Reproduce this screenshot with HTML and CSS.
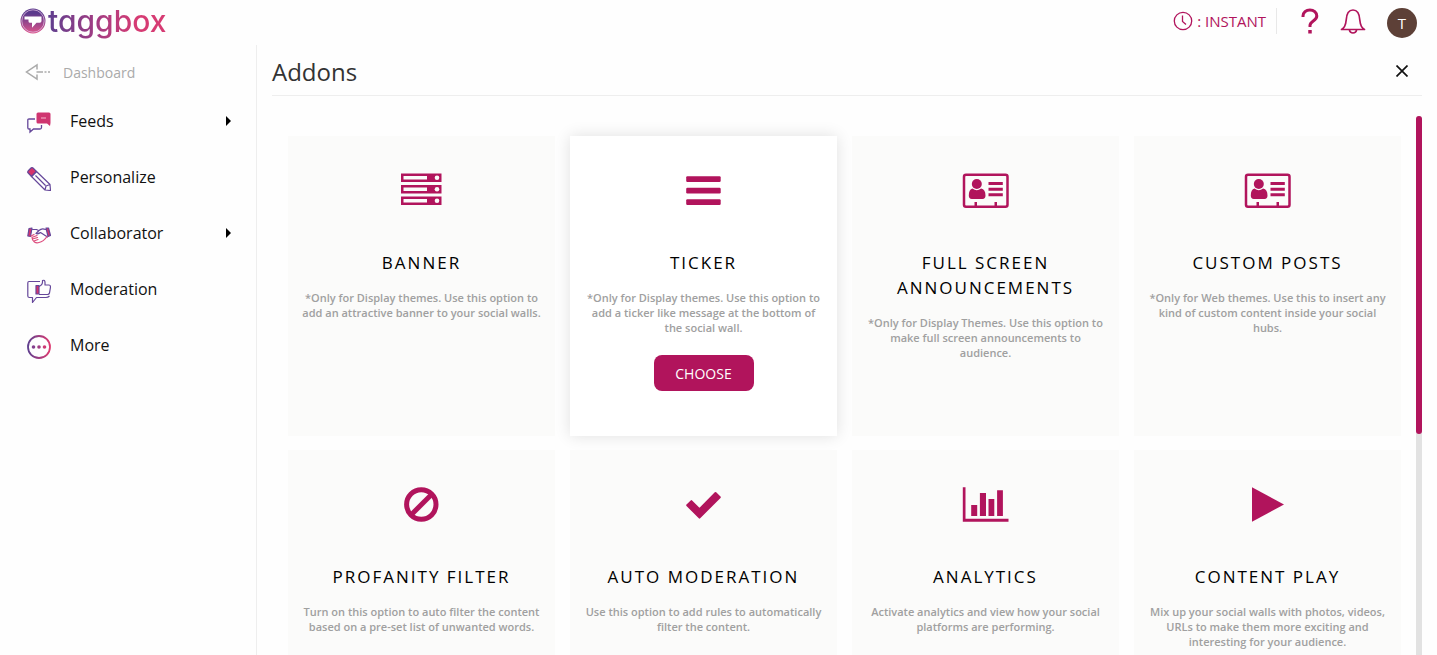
FILE: index.html
```html
<!DOCTYPE html>
<html lang="en">
<head>
    <meta charset="UTF-8">
    <meta name="viewport" content="width=device-width, initial-scale=1.0">
    <title>Taggbox - Addons</title>
    <link rel="stylesheet" href="styles.css">
</head>
<body>
    <header class="topbar">
        <a class="logo" href="#">
            <svg class="logo-mark" viewBox="0 0 26 26">
                <defs>
                    <linearGradient id="markFill" x1="0" y1="0" x2="0" y2="1">
                        <stop offset="0.2" stop-color="#5c3a8c"/>
                        <stop offset="1" stop-color="#e0558c"/>
                    </linearGradient>
                    <linearGradient id="iconFill" x1="0" y1="0" x2="1" y2="0">
                        <stop offset="0" stop-color="#5f3f8f"/>
                        <stop offset="1" stop-color="#dd3a70"/>
                    </linearGradient>
                </defs>
                <circle cx="13" cy="13" r="12.5" fill="url(#markFill)"/>
                <circle cx="13" cy="13" r="11.2" fill="none" stroke="#d9b9dc" stroke-width="0.8"/>
                <path d="M4.500 8.500h17v4.500q0 1.800-1.800 1.800h-3.200l-4.500 5v-5h-2q-1.500 0-1.500-1.500v-1.800h-4z" fill="#fff"/>
            </svg>
            <span class="logo-text">taggbox</span>
        </a>
        <div class="topbar-right">
            <div class="instant">
                <svg class="clock" viewBox="0 0 20 20" fill="none" stroke="currentColor" stroke-width="1.3">
                    <circle cx="10" cy="10" r="8.700"/>
                    <path d="M9.500 4.500v6l3.500 3"/>
                </svg>
                <span>: INSTANT</span>
            </div>
            <button class="icon-btn" aria-label="Help">
                <svg width="18" height="26" viewBox="0 0 18 26" fill="none" stroke="currentColor" stroke-width="3">
                    <path d="M2 9V8a6.800 6 0 0 1 13.800 0c0 5-6.800 5-6.800 9.500v1.500"/>
                    <path d="M9 22v3.500" stroke-width="3.500"/>
                </svg>
            </button>
            <button class="icon-btn" aria-label="Notifications">
                <svg width="26" height="26" viewBox="0 0 26 26" fill="none" stroke="currentColor" stroke-width="1.700" stroke-linejoin="round">
                    <path d="M1.500 21.500c3-1.500 4.200-4 4.700-9.500C6.600 5 8.500 2 13 2s6.400 3 6.800 10c.5 5.500 1.700 8 4.700 9.500z"/>
                    <path d="M9.500 22a3.500 3 0 0 0 7 0"/>
                </svg>
            </button>
            <button class="avatar">T</button>
        </div>
    </header>

    <div class="layout">
        <nav class="sidebar">
            <a class="back" href="#">
                <svg width="26" height="18" viewBox="0 0 26 18" fill="none" stroke="currentColor" stroke-width="1.500">
                    <path d="M12 6.500V2L1.500 9 12 16v-4.500M11.500 9H18M19.500 9h2M23 9h2"/>
                </svg>
                <span>Dashboard</span>
            </a>
            <a class="nav-item" href="#">
                <svg class="nav-icon" viewBox="0 0 24 24">
                    <path d="M11 1.500h11q1.500 0 1.500 1.500v9l-.5 3-3-2.500H11q-1.500 0-1.500-1.500V3q0-1.500 1.500-1.500z" fill="#cf3570"/>
                    <path d="M14 7h5" stroke="#f7b8cc"/>
                    <path d="M8 8H2Q.8 8 .8 9.200v7.600Q.8 18 2 18h1v3l3.500-3H13q1.500 0 1.500-1.500V14" fill="none" stroke="#65479a" stroke-width="1.300"/>
                </svg>
                <span>Feeds</span>
                <i class="caret"></i>
            </a>
            <a class="nav-item" href="#">
                <svg class="nav-icon" viewBox="0 0 24 24" fill="none" stroke="#65479a" stroke-width="1.200" stroke-linejoin="round">
                    <path d="M.8 5.500Q.5 4.500 1.500 3.500L4 1Q5 .2 6 1l3.500 3.500L4.500 9.500z" fill="#d6336c"/>
                    <path d="M4.500 9.500 9.500 4.500 23 17.500 23.500 23.500 18 23zM18 23l1-4 4-1.500M8.500 8.500l10 10"/>
                </svg>
                <span>Personalize</span>
            </a>
            <a class="nav-item" href="#">
                <svg class="nav-icon" viewBox="0 0 24 24" fill="none" stroke-width="1.200" stroke-linejoin="round" stroke-linecap="round">
                    <path d="M2 5.500 5 5 3.500 13.500.8 13zM19 5h2.500l2 7.500-2.500 1z" fill="#d6336c" stroke="#65479a"/>
                    <path d="M5.500 6.500h4l2 1M18.500 6.500c-3-1.500-5-.5-6.500 1l-3 3c2 1 3.500-.5 4.500-1l7 4.500" stroke="#65479a"/>
                    <path d="M4 13l3-1.500M6 14l4-1.500M5.500 16l5-1.500M7 18l4-1.500M5 14c0 5 4 6.500 7 5.500 3-.5 6-3 8-6" stroke="#dd4c7d"/>
                </svg>
                <span>Collaborator</span>
                <i class="caret"></i>
            </a>
            <a class="nav-item" href="#">
                <svg class="nav-icon" viewBox="0 0 24 24" fill="none" stroke="#65479a" stroke-width="1.200" stroke-linejoin="round">
                    <path d="M13 2.500H2Q.8 2.500.8 4v13Q.8 18.500 2.500 18.500H5.500v5l4-5H19q2 0 3.500-1.500"/>
                    <path d="M9 6.500h3v8.500H9z" fill="#d6336c"/>
                    <path d="M12 7.500q3.500-1.500 3.500-4.500V1.500q2.500-1 2.500 2V6h4q1.500 0 1.500 2L22.500 14q-.5 1.500-2 1.500H12"/>
                </svg>
                <span>Moderation</span>
            </a>
            <a class="nav-item" href="#">
                <svg class="nav-icon" viewBox="0 0 24 24">
                    <circle cx="12" cy="12" r="11" fill="none" stroke="url(#iconFill)" stroke-width="1.800"/>
                    <circle cx="6.500" cy="12" r="1.800" fill="#83408d"/>
                    <circle cx="12" cy="12" r="1.800" fill="#a03c83"/>
                    <circle cx="17.500" cy="12" r="1.800" fill="#cc3a74"/>
                </svg>
                <span>More</span>
            </a>
        </nav>

        <main class="content">
            <div class="page-head">
                <h1>Addons</h1>
                <button class="close" aria-label="Close">
                    <svg width="12" height="12" viewBox="0 0 12 12" stroke="currentColor" stroke-width="1.700">
                        <path d="M.5.5l11 11M11.500.5l-11 11"/>
                    </svg>
                </button>
            </div>

            <div class="scroll-area">
                <div class="addons">
                    <section class="card">
                        <svg class="card-icon" viewBox="0 0 48 48">
                            <path d="M3 7.500H43.500V16H3zM3 19H43.500v8.500H3zM3 30.500H43.500V39H3z"/>
                            <path class="cut" d="M5.500 10H29v3.500H5.500zM5.500 21.500H29V25H5.500zM5.500 33H29v3.500H5.500z"/>
                            <circle class="cut" cx="39" cy="11.800" r="2.300"/>
                            <circle class="cut" cx="39" cy="23.300" r="2.300"/>
                            <circle class="cut" cx="39" cy="34.800" r="2.300"/>
                        </svg>
                        <h2>Banner</h2>
                        <p>*Only for Display themes. Use this option to add an attractive banner to your social walls.</p>
                    </section>
                    <section class="card active">
                        <svg class="card-icon" viewBox="0 0 48 48">
                            <rect x="6.200" y="10.300" width="34.500" height="5.700" rx="1.200"/>
                            <rect x="6.200" y="21.700" width="34.500" height="5.700" rx="1.200"/>
                            <rect x="6.200" y="33.200" width="34.500" height="5.700" rx="1.200"/>
                        </svg>
                        <h2>Ticker</h2>
                        <p>*Only for Display themes. Use this option to add a ticker like message at the bottom of the social wall.</p>
                        <button class="choose">CHOOSE</button>
                    </section>
                    <section class="card">
                        <svg class="card-icon" viewBox="0 0 48 48">
                            <rect class="line" x="2" y="8.700" width="43.500" height="32" rx="2"/>
                            <circle cx="14.800" cy="18" r="5"/>
                            <path d="M10.500 22.500q4.300 3.500 8.600 0c3 .5 4.400 3 4.400 7 0 2-1 3.500-3 3.500H9.800c-2 0-3-1.500-3-3.500 0-4 1.200-6.500 3.700-7z"/>
                            <path d="M26.500 16h14.300v3H26.500zM26.500 21.700h14.300v3H26.500zM26.500 27.300h14.300v3H26.500zM12.500 36h2.500v4h-2.500zM32.500 36H35v4h-2.500z"/>
                        </svg>
                        <h2>Full Screen Announcements</h2>
                        <p>*Only for Display Themes. Use this option to make full screen announcements to audience.</p>
                    </section>
                    <section class="card">
                        <svg class="card-icon" viewBox="0 0 48 48">
                            <rect class="line" x="2" y="8.700" width="43.500" height="32" rx="2"/>
                            <circle cx="14.800" cy="18" r="5"/>
                            <path d="M10.500 22.500q4.300 3.500 8.600 0c3 .5 4.400 3 4.400 7 0 2-1 3.500-3 3.500H9.800c-2 0-3-1.500-3-3.500 0-4 1.200-6.500 3.700-7z"/>
                            <path d="M26.500 16h14.300v3H26.500zM26.500 21.700h14.300v3H26.500zM26.500 27.300h14.300v3H26.500zM12.500 36h2.500v4h-2.500zM32.500 36H35v4h-2.500z"/>
                        </svg>
                        <h2>Custom Posts</h2>
                        <p>*Only for Web themes. Use this to insert any kind of custom content inside your social hubs.</p>
                    </section>
                    <section class="card">
                        <svg class="card-icon" viewBox="0 0 48 48">
                            <circle class="ban" cx="23.300" cy="24.500" r="14.700"/>
                            <path class="ban" d="M13.500 34.500 33.500 14.500"/>
                        </svg>
                        <h2>Profanity Filter</h2>
                        <p>Turn on this option to auto filter the content based on a pre-set list of unwanted words.</p>
                    </section>
                    <section class="card">
                        <svg class="card-icon" viewBox="0 0 48 48">
                            <path d="M7.200 25.300 11.400 21.100 19.500 29.200 35.500 13 39.800 17.200 19.500 37.600z" stroke="#b1145c" stroke-width="2" stroke-linejoin="round"/>
                        </svg>
                        <h2>Auto Moderation</h2>
                        <p>Use this option to add rules to automatically filter the content.</p>
                    </section>
                    <section class="card">
                        <svg class="card-icon" viewBox="0 0 48 48">
                            <path d="M.8 7.300h2.700v31.400h43v3H.8zM9.200 25h6v11h-6zM17.900 13H24v23h-6.100zM26.500 19h5.800v17h-5.800zM35.100 10.300h5.800V36h-5.800z"/>
                        </svg>
                        <h2>Analytics</h2>
                        <p>Activate analytics and view how your social platforms are performing.</p>
                    </section>
                    <section class="card">
                        <svg class="card-icon" viewBox="0 0 48 48">
                            <path d="M8 7.300 40 24.500 8 41.700z"/>
                        </svg>
                        <h2>Content Play</h2>
                        <p>Mix up your social walls with photos, videos, URLs to make them more exciting and interesting for your audience.</p>
                    </section>
                </div>
                <div class="scroll-track">
                    <div class="scroll-thumb"></div>
                </div>
            </div>
        </main>
    </div>
</body>
</html>
```
FILE: styles.css
```css
* {
    box-sizing: border-box;
}
body {
    margin: 0;
    height: 100vh;
    display: flex;
    flex-direction: column;
    overflow: hidden;
    background-color: #fefefe;
    font-family: 'Open Sans', sans-serif;
    color: #111;
}
a {
    color: inherit;
    text-decoration: none;
}
button {
    border: none;
    padding: 0;
    background: none;
    font-family: inherit;
    cursor: pointer;
}
svg {
    display: block;
    flex-shrink: 0;
}

/* Top bar */
.topbar {
    display: flex;
    justify-content: space-between;
    height: 45px;
    padding: 0 20px 3px;
    color: #b1145c;
}
.logo {
    display: flex;
    align-items: center;
    gap: 2px;
}
.logo-mark {
    width: 26px;
    height: 26px;
}
.logo-text {
    font-family: 'Inter', sans-serif;
    font-size: 30px;
    font-weight: 500;
    line-height: 42px;
    font-feature-settings: 'cv11';
    background: linear-gradient(to right, #5f3f8f, #a03c83 40%, #d63b73 75%);
    -webkit-background-clip: text;
    background-clip: text;
    color: transparent;
}
.topbar-right {
    display: flex;
    align-items: center;
}
.instant {
    display: flex;
    align-items: center;
    gap: 4px;
    height: 26px;
    padding-right: 10px;
    margin-right: 24px;
    border-right: 1px solid #e8e8e8;
    font-size: 15px;
}
.clock {
    width: 20px;
    height: 20px;
}
.icon-btn {
    margin-right: 21px;
    color: #b1145c;
}
.avatar {
    width: 30px;
    height: 30px;
    margin-top: 3px;
    border-radius: 50%;
    background-color: #5d4037;
    color: #fff;
    font-size: 15px;
}

/* Sidebar */
.layout {
    display: flex;
    flex: 1;
    min-height: 0;
}
.sidebar {
    width: 257px;
    flex-shrink: 0;
    border-right: 1px solid #eee;
}
.back {
    display: flex;
    align-items: center;
    gap: 12px;
    height: 48px;
    padding: 6px 0 0 25px;
    font-size: 14px;
    color: #aaa;
}
.nav-item {
    display: flex;
    align-items: center;
    height: 56px;
    padding: 0 25px 0 27px;
    font-size: 16px;
}
.nav-icon {
    width: 24px;
    height: 24px;
    margin: 4px 19px 0 0;
}
.caret {
    margin-left: auto;
    border: 5px solid transparent;
    border-left-color: #000;
    border-right: none;
}

/* Addons page */
.content {
    display: flex;
    flex-direction: column;
    flex: 1;
    min-width: 0;
    padding: 0 15px;
}
.page-head {
    display: flex;
    justify-content: space-between;
    align-items: center;
    height: 51px;
    padding: 2px 14px 0 0;
    border-bottom: 1px solid #eee;
}
h1 {
    margin: 0;
    font-size: 24px;
    font-weight: 400;
    color: #333;
}
.close {
    color: #111;
}
.scroll-area {
    display: flex;
    flex: 1;
    gap: 15px;
    min-height: 0;
    margin-top: 20px;
    padding-left: 16px;
}
.addons {
    flex: 1;
    display: grid;
    grid-template-columns: repeat(4, 1fr);
    grid-auto-rows: 300px;
    gap: 14px 15px;
    padding: 20px 0;
    overflow-y: auto;
    scrollbar-width: none;
}
.card {
    display: flex;
    flex-direction: column;
    align-items: center;
    padding: 30px 13px;
    background-color: #fbfbfa;
    text-align: center;
}
.card.active {
    background-color: #fff;
    box-shadow: 0 0 15px rgba(0, 0, 0, 0.12);
}
.card-icon {
    width: 48px;
    height: 48px;
    margin-bottom: 36px;
    fill: #b1145c;
}
.card-icon .cut {
    fill: #fbfbfa;
}
.card-icon .line {
    fill: none;
    stroke: #b1145c;
    stroke-width: 2.5;
}
.card-icon .ban {
    fill: none;
    stroke: #b1145c;
    stroke-width: 5;
}
.card h2 {
    margin: 0 0 15px;
    font-size: 17px;
    font-weight: 400;
    line-height: 25px;
    letter-spacing: 2px;
    text-transform: uppercase;
    color: #000;
}
.card p {
    margin: 0;
    font-size: 11px;
    font-weight: 600;
    line-height: 15px;
    color: #a0a0a0;
}
.choose {
    width: 100px;
    height: 36px;
    margin-top: 20px;
    border-radius: 8px;
    background-color: #b1145c;
    color: #fff;
    font-size: 14px;
}
.scroll-track {
    width: 6px;
    background-color: #e2e2e2;
    border-radius: 3px 3px 0 0;
}
.scroll-thumb {
    height: 59%;
    border-radius: 3px;
    background-color: #b1145c;
}
```
